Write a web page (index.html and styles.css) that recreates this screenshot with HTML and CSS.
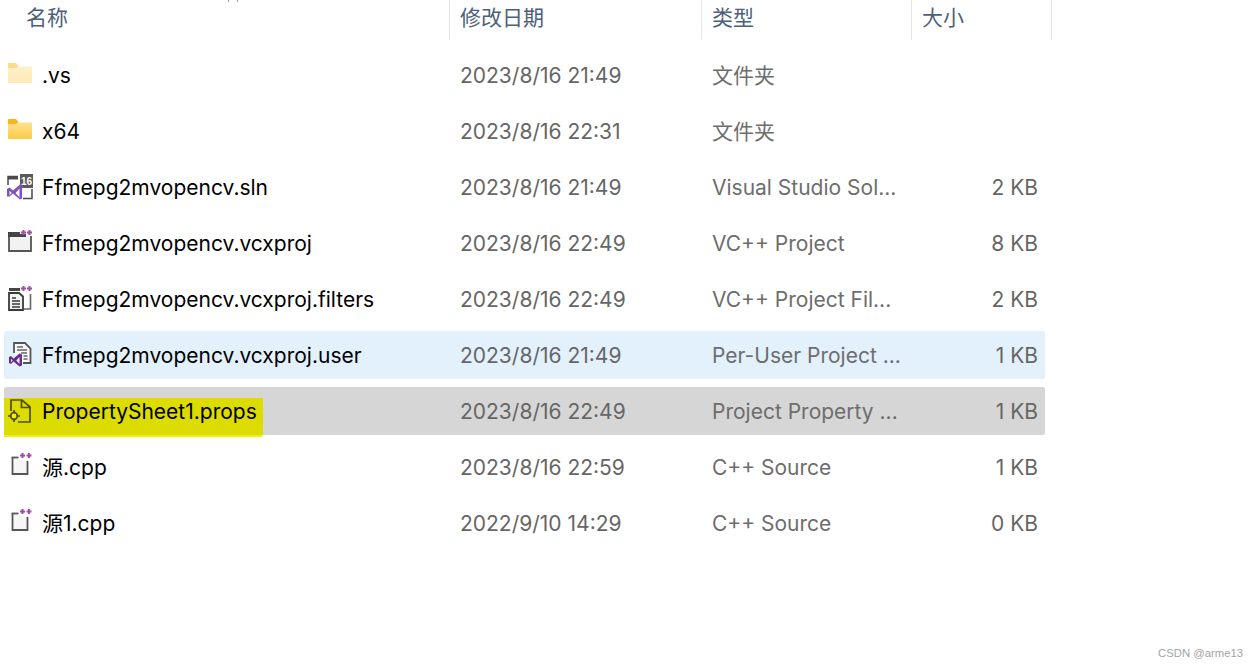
FILE: index.html
```html
<!DOCTYPE html>
<html lang="zh-CN">
<head>
<meta charset="utf-8">
<title>文件列表</title>
<link rel="stylesheet" href="styles.css">
</head>
<body>
<svg class="defs" width="0" height="0" aria-hidden="true">
  <defs>
    <linearGradient id="fa" x1="0" y1="0" x2="0" y2="1"><stop offset="0" stop-color="#ffe28e"/><stop offset="1" stop-color="#fdca45"/></linearGradient>
    <linearGradient id="fb" x1="0" y1="0" x2="0" y2="1"><stop offset="0" stop-color="#fff0c8"/><stop offset="1" stop-color="#fee9b6"/></linearGradient>
  </defs>
</svg>
<div class="cut"></div>
<div class="list">
  <div class="head">
    <div class="hc hc-name">名称</div>
    <div class="hc">修改日期</div>
    <div class="hc">类型</div>
    <div class="hc">大小</div>
  </div>
  <div class="rows">
    <div class="row">
      <div class="name"><svg class="ic" viewBox="0 0 26 26"><path d="M1 4.500h24v15.500a1 1 0 0 1-1 1H2a1 1 0 0 1-1-1z" fill="url(#fb)"/><path d="M1 2a1 1 0 0 1 1-1h7l2.500 3-2.500 2H1z" fill="#fed98b"/></svg><span>.vs</span></div>
      <div class="date">2023/8/16 21:49</div><div class="type">文件夹</div><div class="size"></div>
    </div>
    <div class="row">
      <div class="name"><svg class="ic" viewBox="0 0 26 26"><path d="M1 4.500h24v15.500a1 1 0 0 1-1 1H2a1 1 0 0 1-1-1z" fill="url(#fa)"/><path d="M1 2a1 1 0 0 1 1-1h7l2.500 3-2.500 2H1z" fill="#fcb51c"/></svg><span>x64</span></div>
      <div class="date">2023/8/16 22:31</div><div class="type">文件夹</div><div class="size"></div>
    </div>
    <div class="row">
      <div class="name"><svg class="ic" viewBox="0 0 26 26"><path d="M1 11V2.500h10" fill="none" stroke="#4a4a4a" stroke-width="1.500"/><path d="M1 2h10v3.500H1z" fill="#4a4a4a"/><rect x="13" y="0" width="13" height="14" fill="#5a5a5a"/><text class="sixteen" x="19.500" y="11">16</text><path d="M25 15v9.500H16" fill="none" stroke="#4a4a4a" stroke-width="1.500"/><path d="M0 15l2.500-1.500 3.500 3 7-6 2 1v13l-2 1-7-6-3.500 3L0 22.500zM2.500 16.800v4.400l2.300-2.200zM12.500 14.500l-4 4.500 4 4.500z" fill="#7f4fc4" fill-rule="evenodd"/></svg><span>Ffmepg2mvopencv.sln</span></div>
      <div class="date">2023/8/16 21:49</div><div class="type">Visual Studio Sol...</div><div class="size">2 KB</div>
    </div>
    <div class="row">
      <div class="name"><svg class="ic" viewBox="0 0 26 26"><path d="M2 5v16h22V6" fill="#f2f2f2" stroke="#555" stroke-width="1.800"/><path d="M1 2h12v2h6v3H1z" fill="#454545"/><path d="M14 2.500h5M16.500 0v5M20 2.500h5M22.500 0v5" stroke="#a24ca8" stroke-width="2" fill="none"/></svg><span>Ffmepg2mvopencv.vcxproj</span></div>
      <div class="date">2023/8/16 22:49</div><div class="type">VC++ Project</div><div class="size">8 KB</div>
    </div>
    <div class="row">
      <div class="name"><svg class="ic" viewBox="0 0 26 26"><path d="M2 2h11v3H2z" fill="#454545"/><path d="M23.500 8v15H17" fill="none" stroke="#666" stroke-width="1.600"/><path d="M2 7h10l4 3.500V24H2z" fill="#f2f2f2" stroke="#3a3a3a" stroke-width="1.800"/><path d="M5 12h4M5 15h8M5 18h8M5 21h8" stroke="#3a3a3a" stroke-width="1.500"/><path d="M14 2.500h5M16.500 0v5M20 2.500h5M22.500 0v5" stroke="#a24ca8" stroke-width="2" fill="none"/></svg><span>Ffmepg2mvopencv.vcxproj.filters</span></div>
      <div class="date">2023/8/16 22:49</div><div class="type">VC++ Project Fil...</div><div class="size">2 KB</div>
    </div>
    <div class="row row-hover">
      <div class="name"><svg class="ic" viewBox="0 0 26 26"><path d="M7 11V1h11l5.500 5.500V21H16" fill="#f8f8f8" stroke="#555" stroke-width="1.800"/><path d="M10 5h6M10 8h10M14 11h6M16.500 14h4M16.500 17h4" stroke="#666" stroke-width="1.300"/><path d="M2 15l2-1 2.500 2.500 6-5 2.500 1v11l-2.500 1-6-5L4 22l-2-1zM4 16.700v3.600l1.600-1.800zM12.500 15l-3.200 3.500 3.200 3.500z" fill="#6a2d8c" fill-rule="evenodd"/></svg><span>Ffmepg2mvopencv.vcxproj.user</span></div>
      <div class="date">2023/8/16 21:49</div><div class="type">Per-User Project ...</div><div class="size">1 KB</div>
    </div>
    <div class="row row-selected">
      <div class="marker"></div>
      <div class="name"><svg class="ic" viewBox="0 0 26 26"><path d="M4 13V2h11l8 7v15H11" fill="none" stroke="#4d4d00" stroke-width="1.700"/><path d="M14.500 2v7.500H23" fill="none" stroke="#4d4d00" stroke-width="1.700"/><circle cx="7" cy="18" r="3.300" fill="#f2f200" stroke="#4d4d00" stroke-width="1.700"/><path d="M1 18h2.500M10.500 18H13M7 12v2.500M7 21.500V24" stroke="#4d4d00" stroke-width="1.700"/></svg><span>PropertySheet1.props</span></div>
      <div class="date">2023/8/16 22:49</div><div class="type">Project Property ...</div><div class="size">1 KB</div>
    </div>
    <div class="row">
      <div class="name"><svg class="ic ic-over" viewBox="0 0 26 26"><path d="M5.500 4v16h15V7" fill="#f6f6f6" stroke="#555" stroke-width="1.800"/><path d="M4.500 3.500h7" stroke="#555" stroke-width="1.800"/><path d="M13 1.500h5M15.500-1v5M19.500 1.500h5M22-1v5" stroke="#a24ca8" stroke-width="2" fill="none"/></svg><span>源.cpp</span></div>
      <div class="date">2023/8/16 22:59</div><div class="type">C++ Source</div><div class="size">1 KB</div>
    </div>
    <div class="row">
      <div class="name"><svg class="ic ic-over" viewBox="0 0 26 26"><path d="M5.500 4v16h15V7" fill="#f6f6f6" stroke="#555" stroke-width="1.800"/><path d="M4.500 3.500h7" stroke="#555" stroke-width="1.800"/><path d="M13 1.500h5M15.500-1v5M19.500 1.500h5M22-1v5" stroke="#a24ca8" stroke-width="2" fill="none"/></svg><span>源1.cpp</span></div>
      <div class="date">2022/9/10 14:29</div><div class="type">C++ Source</div><div class="size">0 KB</div>
    </div>
  </div>
</div>
<div class="watermark">CSDN @arme13</div>
</body>
</html>
```
FILE: styles.css
```css
* { box-sizing: border-box; }
html, body { height: 100%; }
body {
  margin: 0;
  background: #fff;
  overflow: hidden;
  position: relative;
  font-family: Inter, "Noto Sans CJK SC", sans-serif;
  font-size: 21px;
}
.defs { position: absolute; }
.cut {
  position: absolute;
  left: 228px;
  top: 0;
  width: 10px;
  height: 2px;
  border-left: 1px solid #9a9a9a;
  border-right: 1px solid #9a9a9a;
}
.list { width: 1052px; }
.head {
  display: grid;
  grid-template-columns: 450px 252px 210px 140px;
  height: 40px;
}
.hc {
  padding: 1px 0 0 10px;
  line-height: 30px;
  color: #4c607a;
  font-family: "Noto Sans CJK SC", sans-serif;
  font-size: 21px;
  border-right: 1px solid #e5e5e5;
}
.hc-name { padding-left: 26px; }
.rows {
  display: flex;
  flex-direction: column;
  gap: 8px;
  margin: 11px 0 0 4px;
  width: 1041px;
}
.row {
  position: relative;
  display: grid;
  grid-template-columns: 446px 252px 210px 133px;
  align-items: center;
  height: 48px;
  line-height: 28px;
  border-radius: 2px;
}
.row-hover { background: #e3f1fd; }
.row-selected { background: #d6d6d6; }
.marker {
  position: absolute;
  left: 0;
  top: 11px;
  width: 259px;
  height: 39px;
  background: #dcdc00;
  border-bottom: 2px solid #f2f200;
  border-radius: 0 0 3px 0;
}
.name {
  position: relative;
  display: flex;
  align-items: center;
  gap: 9px;
  padding-left: 3px;
  color: #000;
  white-space: nowrap;
}
.name span { padding-top: 2px; }
.ic { width: 26px; height: 26px; flex: none; }
.ic-over { overflow: visible; }
.sixteen {
  font-family: "Liberation Sans", sans-serif;
  font-size: 10px;
  font-weight: 700;
  fill: #fff;
  text-anchor: middle;
}
.date, .type {
  padding: 2px 0 0 10px;
  color: #666;
  white-space: nowrap;
}
.type { color: #6d6d6d; }
.size {
  text-align: right;
  padding: 2px 7px 0 0;
  color: #666;
}
.watermark {
  position: absolute;
  right: 15px;
  top: 647px;
  font-family: "Liberation Sans", sans-serif;
  font-size: 11.300px;
  color: #a3a3a3;
}
```
